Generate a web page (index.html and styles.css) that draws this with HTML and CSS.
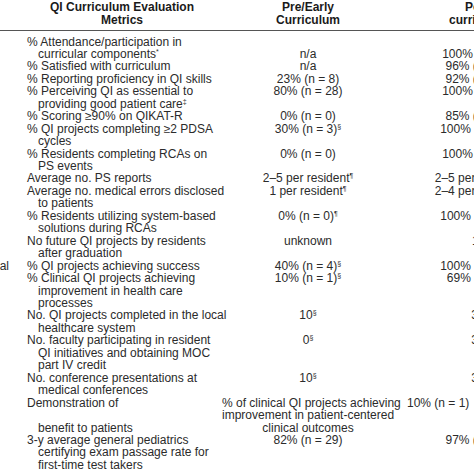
FILE: index.html
```html
<!DOCTYPE html>
<html>
<head>
<meta charset="utf-8">
<link rel="stylesheet" href="styles.css">
</head>
<body>
<div class="frame">
<div class="table">
  <div class="row head">
    <div class="cat"></div>
    <div class="metric-h">QI Curriculum Evaluation<br>Metrics</div>
    <div class="val">Pre/Early<br>Curriculum</div>
    <div class="val">Post-<br>curriculum</div>
  </div>
  <div class="body">
    <div class="row">
      <div class="cat"></div>
      <div class="metric">% Attendance/participation in<br>curricular components<sup>*</sup></div>
      <div class="val low">n/a</div>
      <div class="val low">100% (n = 35)</div>
    </div>
    <div class="row">
      <div class="cat"></div>
      <div class="metric">% Satisfied with curriculum</div>
      <div class="val">n/a</div>
      <div class="val">96% (n = 27)</div>
    </div>
    <div class="row">
      <div class="cat"></div>
      <div class="metric">% Reporting proficiency in QI skills</div>
      <div class="val">23% (n = 8)</div>
      <div class="val">92% (n = 32)</div>
    </div>
    <div class="row">
      <div class="cat"></div>
      <div class="metric">% Perceiving QI as essential to<br>providing good patient care<sup>‡</sup></div>
      <div class="val">80% (n = 28)</div>
      <div class="val">100% (n = 35)</div>
    </div>
    <div class="row">
      <div class="cat"></div>
      <div class="metric">% Scoring ≥90% on QIKAT-R</div>
      <div class="val">0% (n = 0)</div>
      <div class="val">85% (n = 29)</div>
    </div>
    <div class="row">
      <div class="cat"></div>
      <div class="metric">% QI projects completing ≥2 PDSA<br>cycles</div>
      <div class="val">30% (n = 3)<sup>§</sup></div>
      <div class="val">100% (n = 10)<sup>§</sup></div>
    </div>
    <div class="row">
      <div class="cat"></div>
      <div class="metric">% Residents completing RCAs on<br>PS events</div>
      <div class="val">0% (n = 0)</div>
      <div class="val">100% (n = 35)</div>
    </div>
    <div class="row">
      <div class="cat"></div>
      <div class="metric">Average no. PS reports</div>
      <div class="val">2–5 per resident<sup>¶</sup></div>
      <div class="val">2–5 per resident<sup>¶</sup></div>
    </div>
    <div class="row">
      <div class="cat"></div>
      <div class="metric">Average no. medical errors disclosed<br>to patients</div>
      <div class="val">1 per resident<sup>¶</sup></div>
      <div class="val">2–4 per resident<sup>¶</sup></div>
    </div>
    <div class="row">
      <div class="cat"></div>
      <div class="metric">% Residents utilizing system-based<br>solutions during RCAs</div>
      <div class="val">0% (n = 0)<sup>¶</sup></div>
      <div class="val">100% (n = 35)<sup>¶</sup></div>
    </div>
    <div class="row">
      <div class="cat"></div>
      <div class="metric">No future QI projects by residents<br>after graduation</div>
      <div class="val">unknown</div>
      <div class="val">11<sup>¶</sup></div>
    </div>
    <div class="row">
      <div class="cat">Clinical</div>
      <div class="metric">% QI projects achieving success</div>
      <div class="val">40% (n = 4)<sup>§</sup></div>
      <div class="val">100% (n = 10)<sup>§</sup></div>
    </div>
    <div class="row">
      <div class="cat"></div>
      <div class="metric">% Clinical QI projects achieving<br>improvement in health care<br>processes</div>
      <div class="val">10% (n = 1)<sup>§</sup></div>
      <div class="val">69% (n = 9)<sup>§</sup></div>
    </div>
    <div class="row">
      <div class="cat"></div>
      <div class="metric">No. QI projects completed in the local<br>healthcare system</div>
      <div class="val">10<sup>§</sup></div>
      <div class="val">30<sup>§</sup></div>
    </div>
    <div class="row">
      <div class="cat"></div>
      <div class="metric">No. faculty participating in resident<br>QI initiatives and obtaining MOC<br>part IV credit</div>
      <div class="val">0<sup>§</sup></div>
      <div class="val">35<sup>§</sup></div>
    </div>
    <div class="row">
      <div class="cat"></div>
      <div class="metric">No. conference presentations at<br>medical conferences</div>
      <div class="val">10<sup>§</sup></div>
      <div class="val">30<sup>§</sup></div>
    </div>
    <div class="row">
      <div class="cat"></div>
      <div class="metric">Demonstration of<br>&nbsp;<br>benefit to patients</div>
      <div class="val">% of clinical QI projects achieving<br>improvement in patient-centered<br>clinical outcomes</div>
      <div class="val shift">10% (n = 1)</div>
    </div>
    <div class="row">
      <div class="cat"></div>
      <div class="metric">3-y average general pediatrics<br>certifying exam passage rate for<br>first-time test takers</div>
      <div class="val">82% (n = 29)</div>
      <div class="val">97% (n = 34)</div>
    </div>
  </div>
</div>
</div>
</body>
</html>
```

FILE: styles.css
```css
html, body {
  margin: 0;
  padding: 0;
  background: #fff;
  overflow: hidden;
}
.frame {
  width: 474px;
  height: 474px;
  overflow: hidden;
}
.table {
  margin-left: -70px;
  width: 636px;
  font-family: "Liberation Sans", Arial, sans-serif;
  font-size: 12px;
  line-height: 12.45px;
  color: #2b2b2b;
}
.row {
  display: grid;
  grid-template-columns: 92px 200px 172px 172px;
  white-space: nowrap;
}
.head {
  font-weight: bold;
  line-height: 13px;
  padding-top: 1px;
  padding-bottom: 3px;
  border-bottom: 1.5px solid #555;
  color: #1a1a1a;
}
.metric-h {
  text-align: center;
}
.body {
  padding-top: 4.5px;
}
.cat {
  text-align: right;
  padding-right: 13px;
}
.metric {
  padding-left: 16px;
  text-indent: -11px;
}
.val {
  text-align: center;
}
.val.low {
  align-self: end;
}
.val.shift {
  text-align: left;
  padding-left: 13px;
}
sup {
  font-size: 7px;
  line-height: 0;
  vertical-align: 4px;
}
```
